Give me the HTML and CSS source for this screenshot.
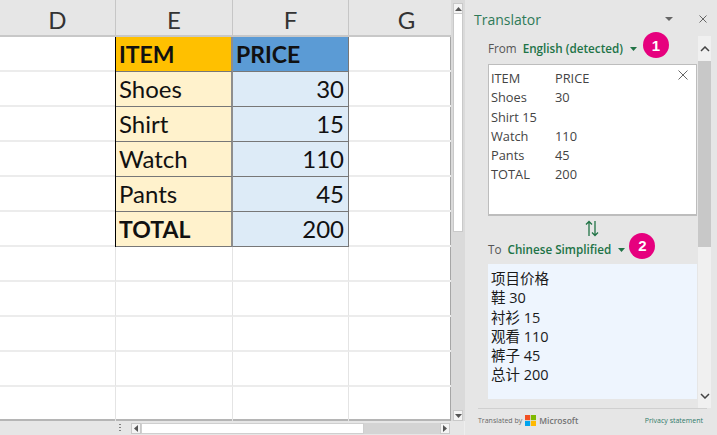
FILE: index.html
```html
<!DOCTYPE html>
<html lang="en">
<head>
<meta charset="utf-8">
<title>Translator</title>
<link rel="stylesheet" href="styles.css">
</head>
<body>
<div class="app">
  <section class="workbook">
    <div class="workarea">
      <div class="sheet">
        <div class="col-h">D</div><div class="col-h">E</div><div class="col-h">F</div><div class="col-h last">G</div>

        <div class="c"></div><div class="c item head">ITEM</div><div class="c price head">PRICE</div><div class="c"></div>
        <div class="c"></div><div class="c item">Shoes</div><div class="c price num">30</div><div class="c"></div>
        <div class="c"></div><div class="c item">Shirt</div><div class="c price num">15</div><div class="c"></div>
        <div class="c"></div><div class="c item">Watch</div><div class="c price num">110</div><div class="c"></div>
        <div class="c"></div><div class="c item">Pants</div><div class="c price num">45</div><div class="c"></div>
        <div class="c"></div><div class="c item total">TOTAL</div><div class="c price num">200</div><div class="c"></div>
        <div class="c"></div><div class="c plain"></div><div class="c plain"></div><div class="c"></div>
        <div class="c"></div><div class="c plain"></div><div class="c plain"></div><div class="c"></div>
        <div class="c"></div><div class="c plain"></div><div class="c plain"></div><div class="c"></div>
        <div class="c"></div><div class="c plain"></div><div class="c plain"></div><div class="c"></div>
        <div class="c end"></div><div class="c plain end"></div><div class="c plain end"></div><div class="c end"></div>
      </div>
      <div class="vscroll">
        <div class="sb-btn"><svg width="7" height="4" viewBox="0 0 7 4"><path d="M3.5 0 7 4H0z" fill="#555"/></svg></div>
        <div class="vthumb"></div>
        <div class="sb-btn"><svg width="7" height="4" viewBox="0 0 7 4"><path d="M0 0h7L3.500 4z" fill="#555"/></svg></div>
      </div>
    </div>
    <div class="hbar">
      <div class="dots"></div>
      <div class="sb-btn h"><svg width="4" height="7" viewBox="0 0 4 7"><path d="M4 0v7L0 3.500z" fill="#555"/></svg></div>
      <div class="hthumb"></div>
      <div class="htrack"></div>
      <div class="sb-btn h"><svg width="4" height="7" viewBox="0 0 4 7"><path d="M0 0v7l4-3.500z" fill="#555"/></svg></div>
    </div>
  </section>

  <aside class="panel">
    <header class="panel-head">
      <h1 class="panel-title">Translator</h1>
      <svg class="menu-caret" width="8" height="4" viewBox="0 0 8 4"><path d="M0 0h8L4 4z" fill="#666"/></svg>
      <svg class="panel-close" width="8" height="8" viewBox="0 0 8 8"><path d="M.5.500l7 7M7.500.500l-7 7" stroke="#666" stroke-width="1" fill="none"/></svg>
    </header>
    <div class="panel-body">
      <div class="panel-main">
        <div class="lang-row from">
          <span class="lang-label">From</span>
          <span class="lang-name">English (detected)</span>
          <svg class="lang-caret" width="7" height="4" viewBox="0 0 7 4"><path d="M0 0h7L3.500 4z" fill="#217346"/></svg>
          <span class="badge">1</span>
        </div>
        <div class="source">
          <svg class="clear" width="10" height="10" viewBox="0 0 10 10"><path d="M.5.500l9 9M9.500.500l-9 9" stroke="#666" stroke-width="1" fill="none"/></svg>
          <div class="src-line"><span class="src-a">ITEM</span><span>PRICE</span></div>
          <div class="src-line"><span class="src-a">Shoes</span><span>30</span></div>
          <div class="src-line"><span>Shirt 15</span></div>
          <div class="src-line"><span class="src-a">Watch</span><span>110</span></div>
          <div class="src-line"><span class="src-a">Pants</span><span>45</span></div>
          <div class="src-line"><span class="src-a">TOTAL</span><span>200</span></div>
        </div>
        <div class="swap">
          <svg width="14" height="17" viewBox="0 0 14 17"><path d="M4 16V1.500M1 4.500 4 1.500l3 3M10 1v14.500M7 12.500l3 3 3-3" stroke="#217346" stroke-width="1.300" fill="none"/></svg>
        </div>
        <div class="lang-row to">
          <span class="lang-label">To</span>
          <span class="lang-name">Chinese Simplified</span>
          <svg class="lang-caret" width="7" height="4" viewBox="0 0 7 4"><path d="M0 0h7L3.500 4z" fill="#217346"/></svg>
          <span class="badge">2</span>
        </div>
        <div class="target">
          <div>项目价格</div>
          <div>鞋 30</div>
          <div>衬衫 15</div>
          <div>观看 110</div>
          <div>裤子 45</div>
          <div>总计 200</div>
        </div>
      </div>
      <div class="pscroll">
        <div class="p-btn"><svg width="10" height="6" viewBox="0 0 10 6"><path d="M1 5l4-4 4 4" stroke="#444" stroke-width="1.500" fill="none"/></svg></div>
        <div class="pthumb"></div>
        <div class="ptrack"></div>
        <div class="p-btn"><svg width="10" height="6" viewBox="0 0 10 6"><path d="M1 1l4 4 4-4" stroke="#444" stroke-width="1.500" fill="none"/></svg></div>
      </div>
    </div>
    <footer class="panel-foot">
      <span class="by">Translated by</span>
      <svg class="ms-logo" width="11" height="11" viewBox="0 0 12 12"><rect width="5.600" height="5.600" fill="#f25022"/><rect x="6.400" width="5.600" height="5.600" fill="#7fba00"/><rect y="6.400" width="5.600" height="5.600" fill="#00a4ef"/><rect x="6.400" y="6.400" width="5.600" height="5.600" fill="#ffb900"/></svg>
      <span class="ms-name">Microsoft</span>
      <span class="privacy">Privacy statement</span>
    </footer>
  </aside>
</div>
</body>
</html>
```

FILE: styles.css
```css
* { box-sizing: border-box; }
html, body { margin: 0; padding: 0; }
body { width: 717px; height: 435px; overflow: hidden; background: #e6e6e6; }
.app { display: flex; width: 717px; height: 435px; }

/* workbook */
.workbook { width: 465px; display: flex; flex-direction: column; flex: none; border-right: 1px solid #eeeeee; }
.workarea { display: flex; height: 421px; flex: none; }
.sheet {
  width: 451px; height: 421px; flex: none; background: #fff;
  display: grid;
  grid-template-columns: 116px 117px 116px 102px;
  grid-template-rows: 37px repeat(10, 35px) 34px;
  border-right: 1px solid #a6a6a6; border-bottom: 2px solid #b5b5b5;
  font-family: Lato, "Liberation Sans", sans-serif;
  color: #111;
}
.col-h {
  background: #e6e6e6; border-right: 1px solid #c6c6c6; border-bottom: 2px solid #c8c8c8;
  display: flex; align-items: center; justify-content: center;
  font-size: 24px; color: #333; padding-top: 3px;
}
.col-h.last { border-right: 0; padding-left: 13px; }
.c {
  border-right: 1px solid #e4e4e4; border-bottom: 2px solid #ececec;
  display: flex; align-items: center; font-size: 24px; padding: 0 4px 0 3px; line-height: 1;
}
.c:nth-child(4n) { border-right: 0; }
.c.end { border-bottom: 0; }
.c.plain { border-right-color: #e4e4e4; }
.item { background: #fff2cc; border-right: 2px solid #8e8e8e; border-bottom: 1px solid #777; box-shadow: -1px 0 0 #000; }
.price { background: #ddebf7; border-right: 1px solid #777; border-bottom: 1px solid #777; }
.item.head { background: #ffc000; font-weight: 700; font-size: 23px; }
.price.head { background: #5b9bd5; font-weight: 700; font-size: 23px; }
.item.total { font-weight: 700; font-size: 23px; }
.num { justify-content: flex-end; }

.vscroll { width: 14px; flex: none; background: #dadada; padding: 3px 2px 0 2px; display: flex; flex-direction: column; }
.sb-btn { height: 11px; width: 10px; background: #f4f4f4; border: 1px solid #c9c9c9; display: flex; align-items: center; justify-content: center; flex: none; }
.vthumb { height: 218px; background: #fff; border: 1px solid #c9c9c9; border-top: 0; width: 10px; margin-bottom: auto; }

.hbar { flex: 1; display: flex; align-items: center; padding-left: 119px; padding-right: 14px; }
.dots { width: 2px; height: 9px; margin-right: 10px; background: repeating-linear-gradient(#808080 0 1px, transparent 1px 3px); flex: none; }
.sb-btn.h { width: 10px; height: 11px; }
.hthumb { width: 223px; height: 11px; background: #fff; border: 1px solid #cfcfcf; flex: none; }
.htrack { flex: 1; height: 11px; background: #d4d4d4; }

/* panel */
.panel { flex: 1; display: flex; flex-direction: column; font-family: "Open Sans", "Noto Sans", sans-serif; }
.panel-head { height: 36px; flex: none; display: flex; align-items: center; padding: 4px 10px 0 9px; }
.panel-title { margin: 0; font-size: 14px; font-weight: 400; color: #2f7a58; flex: 1; position: relative; top: -1px; }
.menu-caret { margin-right: 26px; position: relative; top: -1px; }
.panel-close { position: relative; top: -1px; }

.panel-body { display: flex; height: 372px; flex: none; padding-left: 23px; padding-right: 5px; }
.panel-main { width: 209px; flex: none; display: flex; flex-direction: column; }
.lang-row { display: flex; align-items: center; font-size: 11.700px; white-space: nowrap; }
.lang-row.from { height: 28px; padding-bottom: 4px; }
.lang-row.to { height: 21px; }
.lang-label { color: #555; margin-right: 6px; }
.lang-name { color: #217346; font-weight: 600; }
.lang-caret { margin-left: 7px; margin-right: 6px; position: relative; top: 1px; }
.to .lang-caret { margin-right: 4px; }
.badge {
  width: 26px; height: 26px; border-radius: 50%; background: #e6007e; color: #fff;
  display: flex; align-items: center; justify-content: center; flex: none;
  font-family: "Liberation Sans", sans-serif; font-weight: 700; font-size: 15px;
  position: relative; top: -3px;
}
.source {
  position: relative; height: 152px; background: #fff; flex: none;
  border: 1px solid #bdbdbd; border-width: 1px 1px 2px 1px;
  padding: 4px 2px; font-size: 12.800px; line-height: 19.300px; color: #444;
}
.src-line { display: flex; }
.src-a { width: 64px; flex: none; }
.clear { position: absolute; right: 8px; top: 5px; }
.swap { height: 22px; flex: none; display: flex; justify-content: center; align-items: center; padding-right: 2px; padding-top: 2px; }
.target {
  height: 135px; flex: none; margin-top: 5px; background: #eef5fe;
  padding: 5px 3px; font-size: 14.500px; line-height: 19.300px; color: #1a1a1a;
  font-family: "Open Sans", "Noto Sans CJK SC", sans-serif;
}

.pscroll { width: 13px; margin-left: 1px; flex: none; background: #f0f0f0; display: flex; flex-direction: column; }
.p-btn { height: 25px; flex: none; display: flex; align-items: center; justify-content: center; }
.pthumb { height: 186px; background: #c8c8c8; flex: none; }
.ptrack { flex: 1; }

.panel-foot {
  height: 27px; flex: none; display: flex; align-items: center; padding-bottom: 4px;
  margin: 0 10px 0 13px; border-top: 1px solid #d0d0d0; font-size: 7px; color: #666;
}
.by { margin-right: 3px; }
.ms-logo { margin-right: 3px; flex: none; }
.ms-name { font-size: 8.500px; font-weight: 600; color: #737373; }
.privacy { margin-left: auto; color: #2f7a6a; margin-right: 4px; }
```
